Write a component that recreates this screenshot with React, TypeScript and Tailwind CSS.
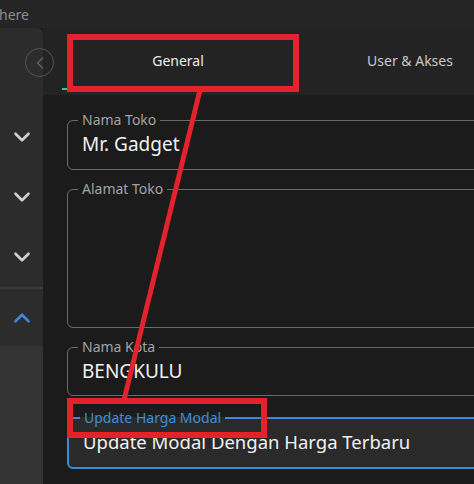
import { ChevronDown, ChevronUp, ChevronLeft } from "lucide-react";

type FieldProps = {
  label: string;
  value?: string;
  height: string;
  active?: boolean;
};

function OutlinedField({ label, value, height, active }: FieldProps) {
  return (
    <fieldset
      className={`${height} rounded-[6px] pl-[10px] pr-3 ${
        active ? "border-2 border-[#3b8ad8] bg-[#2a2a2a]" : "border border-[#6a6a6a]"
      }`}
    >
      <legend
        className={`px-[4px] text-[14px] leading-[16px] ${
          active ? "text-[#3d8ed8] ml-[1px]" : "text-[#a3a3a3]"
        }`}
      >
        {label}
      </legend>
      {value && (
        <div
          className={`pt-[2px] pl-[4px] leading-[28px] text-[#f2f2f2] whitespace-nowrap ${
            active ? "text-[18.5px]" : "text-[19px]"
          }`}
        >
          {value}
        </div>
      )}
    </fieldset>
  );
}

export default function App() {
  return (
    <div className="relative w-[474px] h-[484px] overflow-hidden bg-[#1b1b1b] font-['Noto_Sans',sans-serif]">
      {/* window title strip */}
      <div className="h-[28px] bg-[#252525] flex items-center">
        <span className="-ml-[1px] text-[14px] text-[#8c8c8c]">here</span>
      </div>

      <div className="flex h-[456px]">
        {/* collapsed side menu */}
        <aside className="w-[43px] shrink-0 flex flex-col bg-[#2c2c2c] rounded-tr-[6px] overflow-hidden">
          <div className="h-[79px]" />
          <div className="h-[60px] flex items-center justify-center text-[#d0d0d0]">
            <ChevronDown size={26} strokeWidth={2.4} />
          </div>
          <div className="h-[60px] flex items-center justify-center text-[#d0d0d0]">
            <ChevronDown size={26} strokeWidth={2.4} />
          </div>
          <div className="h-[60px] flex items-center justify-center text-[#d0d0d0]">
            <ChevronDown size={26} strokeWidth={2.4} />
          </div>
          <div className="h-[2px] bg-[#3a3a3a]" />
          <div className="h-[57px] flex items-center justify-center text-[#3b8ad8]">
            <ChevronUp size={26} strokeWidth={2.4} />
          </div>
          <div className="flex-1 bg-[#333333]" />
        </aside>

        <main className="flex-1 flex flex-col min-w-0">
          {/* tabs */}
          <div className="h-[67px] shrink-0 flex bg-[#232323] overflow-hidden">
            <div className="relative w-[270px] shrink-0 flex items-center justify-center pb-[2px] text-[14px] text-[#ececec]">
              General
              <span className="absolute left-[19px] bottom-[5px] w-[6px] h-[2px] bg-[#2fc7a4]" />
            </div>
            <div className="w-[194px] shrink-0 flex items-center justify-center pb-[2px] text-[14px] text-[#c9c9c9]">
              User &amp; Akses
            </div>
          </div>

          {/* store settings form */}
          <div className="flex flex-col pl-[24px] pt-[17px] -mr-[20px]">
            <OutlinedField label="Nama Toko" value="Mr. Gadget" height="h-[58px]" />
            <div className="h-[11px]" />
            <OutlinedField label="Alamat Toko" height="h-[147px]" />
            <div className="h-[11px]" />
            <OutlinedField label="Nama Kota" value="BENGKULU" height="h-[57px]" />
            <div className="h-[14px]" />
            <OutlinedField
              label="Update Harga Modal"
              value="Update Modal Dengan Harga Terbaru"
              height="h-[59px]"
              active
            />
          </div>
        </main>
      </div>

      {/* back button sitting on the menu edge */}
      <button className="absolute left-[25px] top-[48px] w-[29px] h-[29px] rounded-full border-[1.5px] border-[#555555] flex items-center justify-center text-[#5e5e5e]">
        <ChevronLeft size={20} strokeWidth={2} />
      </button>

      {/* callout marks */}
      <div className="absolute left-[67px] top-[34px] w-[232px] h-[58px] border-[6px] border-[#e3222b]" />
      <div className="absolute left-[67px] top-[398px] w-[200px] h-[40px] border-[6px] border-[#e3222b]" />
      <svg className="absolute inset-0 pointer-events-none" width="474" height="484">
        <line x1="200" y1="90" x2="124" y2="400" stroke="#e3222b" strokeWidth="5" />
      </svg>
    </div>
  );
}
